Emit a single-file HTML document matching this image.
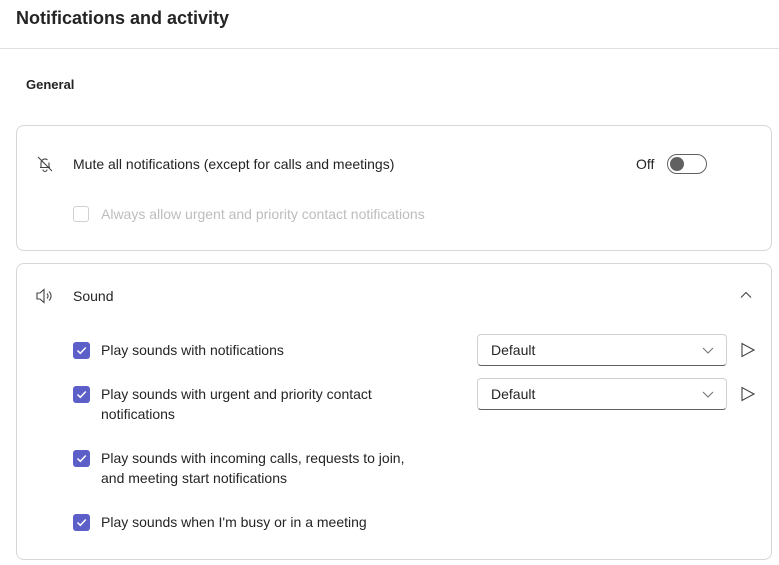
<!DOCTYPE html>
<html><head><style>
*{margin:0;padding:0;box-sizing:border-box}
body{width:779px;height:565px;background:#fff;font-family:"Liberation Sans",sans-serif;color:#242424;position:relative;overflow:hidden;font-size:14px}
.a{position:absolute;white-space:nowrap}
.card{position:absolute;left:16px;width:756px;border:1px solid #d6d6d6;border-radius:8px}
.cb{position:absolute;width:17px;height:17px;border-radius:3px;background:#5b5fc7}
.cb svg{position:absolute;left:2px;top:2px}
.dd{position:absolute;left:477px;width:250px;height:32px;border:1px solid #d1d1d1;border-bottom-color:#616161;border-radius:4px}
.dd span{position:absolute;left:13px;top:7px}
.dd svg{position:absolute;right:12px;top:12px}
</style></head><body>
<div class="a" style="left:16px;top:8px;font-size:18px;font-weight:bold">Notifications and activity</div>
<div class="a" style="left:0;top:48px;width:779px;height:1px;background:#e0e0e0"></div>
<div class="a" style="left:26px;top:77px;font-size:13px;font-weight:bold">General</div>
<div class="card" style="top:125px;height:126px"></div>
<svg class="a" style="left:36px;top:155px" width="18" height="18" viewBox="0 0 18 18" fill="none" stroke="#424242" stroke-width="1.1"><path d="M4 12.5h10M5 12.5V8a4 4 0 0 1 6.5-3.1M13 7.5v5M7 14.5a2 2 0 0 0 4 0M2 2l14 14"/></svg>
<div class="a" style="left:73px;top:156px">Mute all notifications (except for calls and meetings)</div>
<div class="a" style="left:636px;top:156px">Off</div>
<div class="a" style="left:667px;top:154px;width:40px;height:20px;border:1px solid #616161;border-radius:10px"><div style="position:absolute;left:2px;top:2px;width:14px;height:14px;border-radius:50%;background:#616161"></div></div>
<div class="a" style="left:73px;top:206px;width:16px;height:16px;border:1px solid #d1d1d1;border-radius:3px"></div>
<div class="a" style="left:101px;top:206px;color:#bdbdbd">Always allow urgent and priority contact notifications</div>
<div class="card" style="top:263px;height:297px"></div>
<svg class="a" style="left:36px;top:288px" width="18" height="16" viewBox="0 0 18 16" fill="none" stroke="#424242" stroke-width="1.1"><path d="M1 5h3l4-3.5v13L4 11H1z"/><path d="M11 5.5a3.5 3.5 0 0 1 0 5M13 3.5a6 6 0 0 1 0 9"/></svg>
<div class="a" style="left:73px;top:288px">Sound</div>
<svg class="a" style="left:740px;top:291px" width="12" height="8" viewBox="0 0 12 8" fill="none" stroke="#424242" stroke-width="1.1"><path d="M1 6.5l5-5 5 5"/></svg>
<div class="cb" style="left:73px;top:342px"><svg width="13" height="13" viewBox="0 0 13 13" fill="none" stroke="#fff" stroke-width="1.5"><path d="M2.5 6.5l2.8 2.8 5.5-5.8"/></svg></div>
<div class="a" style="left:101px;top:342px">Play sounds with notifications</div>
<div class="dd" style="top:334px"><span>Default</span><svg width="12" height="7" viewBox="0 0 12 7" fill="none" stroke="#757575" stroke-width="1.1"><path d="M1 1l5 5 5-5"/></svg></div>
<svg class="a" style="left:740px;top:342px" width="16" height="16" viewBox="0 0 16 16" fill="none" stroke="#424242" stroke-width="1.1"><path d="M2 1.5v13l12-6.5z"/></svg>
<div class="cb" style="left:73px;top:386px"><svg width="13" height="13" viewBox="0 0 13 13" fill="none" stroke="#fff" stroke-width="1.5"><path d="M2.5 6.5l2.8 2.8 5.5-5.8"/></svg></div>
<div class="a" style="left:101px;top:384px;line-height:20px;white-space:normal;width:300px">Play sounds with urgent and priority contact notifications</div>
<div class="dd" style="top:378px"><span>Default</span><svg width="12" height="7" viewBox="0 0 12 7" fill="none" stroke="#757575" stroke-width="1.1"><path d="M1 1l5 5 5-5"/></svg></div>
<svg class="a" style="left:740px;top:386px" width="16" height="16" viewBox="0 0 16 16" fill="none" stroke="#424242" stroke-width="1.1"><path d="M2 1.5v13l12-6.5z"/></svg>
<div class="cb" style="left:73px;top:450px"><svg width="13" height="13" viewBox="0 0 13 13" fill="none" stroke="#fff" stroke-width="1.5"><path d="M2.5 6.5l2.8 2.8 5.5-5.8"/></svg></div>
<div class="a" style="left:101px;top:448px;line-height:20px">Play sounds with incoming calls, requests to join,<br>and meeting start notifications</div>
<div class="cb" style="left:73px;top:514px"><svg width="13" height="13" viewBox="0 0 13 13" fill="none" stroke="#fff" stroke-width="1.5"><path d="M2.5 6.5l2.8 2.8 5.5-5.8"/></svg></div>
<div class="a" style="left:101px;top:514px">Play sounds when I'm busy or in a meeting</div>
</body></html>
